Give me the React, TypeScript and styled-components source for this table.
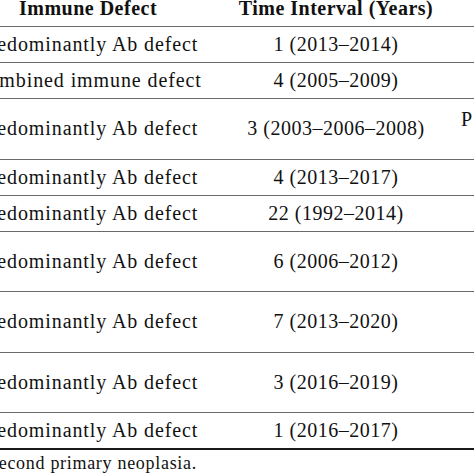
import styled, { createGlobalStyle } from "styled-components";

const GlobalStyle = createGlobalStyle`
  html, body {
    margin: 0;
    padding: 0;
    background: #fff;
    overflow: hidden;
  }
`;

const Frame = styled.div`
  width: max-content;
  margin-top: -9px;
  margin-left: -44px;
  font-family: "Liberation Serif", "Times New Roman", serif;
  color: #111;
`;

const Table = styled.table`
  border-collapse: collapse;
  table-layout: fixed;
  font-size: 20px;
  letter-spacing: 0.5px;
`;

const Col = styled.col<{ $w: number }>`
  width: ${(p) => p.$w}px;
`;

const HeadCell = styled.th`
  padding: 5px 0;
  line-height: 25px;
  font-weight: bold;
  text-align: center;
  white-space: nowrap;
  border-bottom: 1px solid #6a6a6a;
`;

const Row = styled.tr`
  border-bottom: 1px solid #6a6a6a;
  &:last-child {
    border-bottom: 2px solid #1a1a1a;
  }
`;

const Cell = styled.td<{ $align?: "left" | "center" }>`
  padding: ${(p) => (p.$align === "left" ? "5px 0 5px 9px" : "5px 0")};
  line-height: 25px;
  text-align: ${(p) => p.$align || "center"};
  vertical-align: middle;
  white-space: nowrap;
`;

const DefectCell = styled(Cell)`
  letter-spacing: 0.9px;
`;

const Lines = styled.div`
  width: max-content;
  padding: 4.75px 0;
  line-height: 20px;
  letter-spacing: 1.6px;
  text-align: center;
`;

const Note = styled.p`
  margin: 3px 0 0;
  padding-left: 32px;
  font-size: 18px;
  line-height: 20px;
  letter-spacing: 0.7px;
`;

type Entry = {
  defect: string;
  interval: string;
  cause?: string[];
  therapy?: string[];
};

const rows: Entry[] = [
  { defect: "Predominantly Ab defect", interval: "1 (2013–2014)" },
  { defect: "Combined immune defect", interval: "4 (2005–2009)" },
  {
    defect: "Predominantly Ab defect",
    interval: "3 (2003–2006–2008)",
    cause: ["Pneumocystis jirovecii", "pneumonia"],
  },
  { defect: "Predominantly Ab defect", interval: "4 (2013–2017)" },
  { defect: "Predominantly Ab defect", interval: "22 (1992–2014)" },
  {
    defect: "Predominantly Ab defect",
    interval: "6 (2006–2012)",
    therapy: ["Chemotherapy,", "radiotherapy"],
  },
  {
    defect: "Predominantly Ab defect",
    interval: "7 (2013–2020)",
    therapy: ["Surgery,", "chemotherapy"],
  },
  {
    defect: "Predominantly Ab defect",
    interval: "3 (2016–2019)",
    therapy: ["Chemotherapy,", "rituximab"],
  },
  { defect: "Predominantly Ab defect", interval: "1 (2016–2017)" },
];

function MultiLine({ lines }: { lines?: string[] }) {
  if (!lines) return null;
  return (
    <Lines>
      {lines.map((l, i) => (
        <span key={i}>
          {l}
          {i < lines.length - 1 && <br />}
        </span>
      ))}
    </Lines>
  );
}

export default function App() {
  return (
    <>
      <GlobalStyle />
      <Frame>
        <Table>
          <colgroup>
            <Col $w={264} />
            <Col $w={232} />
            <Col $w={260} />
            <Col $w={220} />
          </colgroup>
          <thead>
            <tr>
              <HeadCell>Immune Defect</HeadCell>
              <HeadCell>Time Interval (Years)</HeadCell>
              <HeadCell>Cause of Death</HeadCell>
              <HeadCell>Therapy</HeadCell>
            </tr>
          </thead>
          <tbody>
            {rows.map((r, i) => (
              <Row key={i}>
                <DefectCell>{r.defect}</DefectCell>
                <Cell>{r.interval}</Cell>
                <Cell $align="left">
                  <MultiLine lines={r.cause} />
                </Cell>
                <Cell $align="left">
                  <MultiLine lines={r.therapy} />
                </Cell>
              </Row>
            ))}
          </tbody>
        </Table>
        <Note>Second primary neoplasia.</Note>
      </Frame>
    </>
  );
}
